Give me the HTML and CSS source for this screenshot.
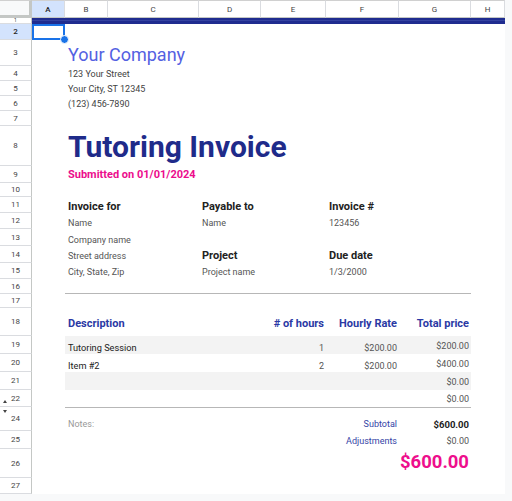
FILE: index.html
```html
<!DOCTYPE html>
<html>
<head>
<meta charset="utf-8">
<link rel="stylesheet" href="styles.css">
</head>
<body>
<div class="sheet">
  <div class="row colhead">
    <div class="corner"></div>
    <div class="ch sel">A</div><div class="ch">B</div><div class="ch">C</div><div class="ch">D</div>
    <div class="ch">E</div><div class="ch">F</div><div class="ch">G</div><div class="ch">H</div>
  </div>
  <div class="row h6"><div class="rh tiny">1</div><div class="band"></div></div>
  <div class="row h16"><div class="rh sel">2</div><div class="selcell"><span class="handle"></span></div></div>
  <div class="row h26"><div class="rh">3</div><div class="c wide company pb0">Your Company</div></div>
  <div class="row h15"><div class="rh">4</div><div class="c wide addr">123 Your Street</div></div>
  <div class="row h15"><div class="rh">5</div><div class="c wide addr">Your City, ST 12345</div></div>
  <div class="row h15"><div class="rh">6</div><div class="c wide addr">(123) 456-7890</div></div>
  <div class="row h15"><div class="rh">7</div></div>
  <div class="row h40"><div class="rh">8</div><div class="c wide title">Tutoring Invoice</div></div>
  <div class="row h17"><div class="rh">9</div><div class="c wide submitted">Submitted on 01/01/2024</div></div>
  <div class="row h14"><div class="rh">10</div></div>
  <div class="row h16"><div class="rh">11</div>
    <div class="c colB lbl">Invoice for</div><div class="c colD lbl">Payable to</div><div class="c colF lbl">Invoice #</div></div>
  <div class="row h16"><div class="rh">12</div>
    <div class="c colB info">Name</div><div class="c colD info">Name</div><div class="c colF info">123456</div></div>
  <div class="row h17"><div class="rh">13</div><div class="c colB info">Company name</div></div>
  <div class="row h17"><div class="rh">14</div>
    <div class="c colB info pb1">Street address</div><div class="c colD lbl pb1">Project</div><div class="c colF lbl pb1">Due date</div></div>
  <div class="row h16"><div class="rh">15</div>
    <div class="c colB info pb1">City, State, Zip</div><div class="c colD info pb1">Project name</div><div class="c colF info pb1">1/3/2000</div></div>
  <div class="row h15"><div class="rh">16</div><div class="rule-bottom"></div></div>
  <div class="row h14"><div class="rh">17</div></div>
  <div class="row h28"><div class="rh">18</div>
    <div class="c colBD th">Description</div><div class="c colE th r">#&nbsp;of hours</div><div class="c colF th r">Hourly Rate</div><div class="c colG th r">Total price</div></div>
  <div class="row h18"><div class="rh">19</div><div class="stripe"></div>
    <div class="c colBD item">Tutoring Session</div><div class="c colE num r">1</div><div class="c colF num r">$200.00</div><div class="c colG num r up">$200.00</div></div>
  <div class="row h18"><div class="rh">20</div>
    <div class="c colBD item">Item #2</div><div class="c colE num r">2</div><div class="c colF num r">$200.00</div><div class="c colG num r up">$400.00</div></div>
  <div class="row h18"><div class="rh">21</div><div class="stripe"></div><div class="c colG num r up">$0.00</div></div>
  <div class="row h17"><div class="rh"><span class="tri-up"></span>22</div><div class="c colG num r up">$0.00</div></div>
  <div class="row h24"><div class="rh"><span class="tri-down"></span>24</div><div class="rule-top"></div>
    <div class="c colBD notes pb1">Notes:</div><div class="c colF sumlbl r pb1">Subtotal</div><div class="c colG subtotal r pb1">$600.00</div></div>
  <div class="row h18"><div class="rh">25</div>
    <div class="c colF sumlbl r">Adjustments</div><div class="c colG num r pb2">$0.00</div></div>
  <div class="row h29"><div class="rh">26</div><div class="c colFG total r">$600.00</div></div>
  <div class="row h16"><div class="rh">27</div></div>
</div>
</body>
</html>
```
FILE: styles.css
```css
html, body { margin: 0; padding: 0; }
body {
  background: #f8f9fa;
  font-family: Roboto, "Liberation Sans", Arial, sans-serif;
  width: 512px;
  height: 501px;
  overflow: hidden;
}
.sheet { width: 505px; background: #fff; }
.row {
  display: grid;
  grid-template-columns: 32px 33px 43px 91px 62px 65px 73px 72px 34px;
  grid-template-rows: 100%;
  position: relative;
}
.row > * { grid-row: 1; min-width: 0; }
.colhead { height: 18px; }
.h6 { height: 6px; } .h14 { height: 14px; } .h15 { height: 15px; } .h16 { height: 16px; }
.h17 { height: 17px; } .h18 { height: 18px; } .h24 { height: 24px; } .h26 { height: 26px; }
.h28 { height: 28px; } .h29 { height: 29px; } .h40 { height: 40px; }

.corner {
  grid-column: 1;
  background: #f8f9fa;
  border-right: 3px solid #c4c7c5;
  border-bottom: 3px solid #c4c7c5;
  border-top: 1px solid #d0d0d0;
  box-sizing: border-box;
}
.ch {
  display: flex; align-items: center; justify-content: center;
  font-size: 8px; color: #444;
  border-right: 1px solid #dadce0;
  border-top: 1px solid #d0d0d0;
  border-bottom: 1px solid #c4c7c5;
  box-sizing: border-box;
  background: #fff;
}
.ch.sel { background: #d3e3fd; color: #1f1f1f; font-weight: 500; }
.rh {
  grid-column: 1;
  position: relative;
  display: flex; align-items: center; justify-content: center;
  font-size: 8px; color: #444;
  border-right: 1px solid #c4c7c5;
  border-bottom: 1px solid #dadce0;
  box-sizing: border-box;
  background: #fff;
  overflow: hidden;
}
.rh.sel { background: #d3e3fd; color: #1f1f1f; font-weight: 500; }
.rh.tiny { font-size: 5px; align-items: flex-end; line-height: 5px; }
.tri-up {
  position: absolute; left: 3px; bottom: 3px;
  border-left: 2.5px solid transparent; border-right: 2.5px solid transparent;
  border-bottom: 3px solid #444;
}
.tri-down {
  position: absolute; left: 3px; top: 3px;
  border-left: 2.5px solid transparent; border-right: 2.5px solid transparent;
  border-top: 3px solid #444;
}
.band {
  grid-column: 2 / 10;
  background: #1f2c8f;
  background-image: linear-gradient(to bottom, transparent 2px, #3442a0 2px, #3442a0 3px, transparent 3px);
}
.selcell {
  grid-column: 2;
  position: relative;
  border: 2px solid #1a73e8;
  box-sizing: border-box;
}
.handle {
  position: absolute;
  right: -6px; bottom: -6px;
  width: 7px; height: 7px;
  border-radius: 50%;
  background: #1a73e8;
  border: 1px solid #fff;
}

.c {
  display: flex; align-items: flex-end;
  padding: 0 2px 2px 3px;
  white-space: nowrap;
  line-height: 1.2;
  box-sizing: border-box;
  position: relative; z-index: 1;
}
.r { justify-content: flex-end; }
.wide { grid-column: 3 / 10; }
.colB { grid-column: 3 / 5; }
.colBD { grid-column: 3 / 6; }
.colD { grid-column: 5 / 7; }
.colE { grid-column: 6; }
.colF { grid-column: 7; }
.colG { grid-column: 8; }
.colFG { grid-column: 7 / 9; }

.company { font-size: 18px; color: #5461e2; }
.addr { font-size: 9px; color: #434343; padding-bottom: 1px; }
.title { font-size: 30px; font-weight: 700; color: #1f2b8a; padding-bottom: 1px; }
.submitted { font-size: 11px; font-weight: 700; color: #ec0c8c; }
.lbl { font-size: 11px; font-weight: 700; color: #222; padding-bottom: 0; }
.info { font-size: 9px; color: #555; padding-bottom: 0; }
.th { font-size: 11px; font-weight: 700; color: #2a39a4; padding-bottom: 6px; }
.item { font-size: 9.2px; color: #222; padding-bottom: 1px; }
.num { font-size: 9px; color: #555; padding-bottom: 0; }
.num.up { padding-bottom: 2px; }
.notes { font-size: 9px; color: #999; }
.sumlbl { font-size: 9px; color: #3443a6; }
.subtotal { font-size: 9.5px; font-weight: 700; color: #222; }
.total { font-size: 18.5px; font-weight: 700; color: #ee0e8c; padding-bottom: 5px; }
.pb0 { padding-bottom: 0; }
.pb1 { padding-bottom: 1px; }
.pb2 { padding-bottom: 2px; }
.pb3 { padding-bottom: 3px; }

.stripe { grid-column: 3 / 9; background: #f3f3f3; }
.rule-bottom { grid-column: 3 / 9; border-bottom: 1px solid #b7b7b7; }
.rule-top { grid-column: 3 / 9; border-top: 1px solid #b7b7b7; }
```
